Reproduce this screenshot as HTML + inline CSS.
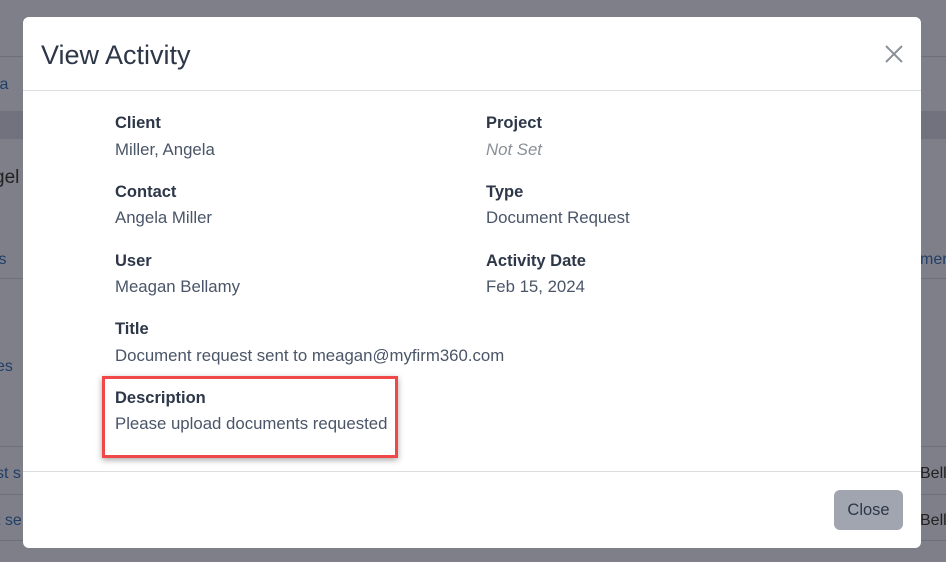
<!DOCTYPE html>
<html><head><meta charset="utf-8"><style>
*{margin:0;padding:0;box-sizing:border-box}
body{width:946px;height:562px;overflow:hidden;background:#7f7f8a;font-family:"Liberation Sans",sans-serif;position:relative}
.bg{position:absolute;color:#1f3f66;font-size:16px;white-space:nowrap}
.ln{position:absolute;left:0;width:946px;height:1px;background:#6e6f7a}
.modal{position:absolute;left:23px;top:17px;width:898px;height:531px;background:#fff;border-radius:6px}
.hdr{position:absolute;left:18px;top:23px;font-size:27px;color:#2d3748}
.x{position:absolute;left:861px;top:27px}
.sep{position:absolute;left:0;width:898px;height:1px;background:#dcdde0}
.lab{position:absolute;font-size:16.5px;font-weight:bold;color:#2d3748}
.val{position:absolute;font-size:16.8px;color:#4a5568}
.btn{position:absolute;left:811px;top:473px;width:69px;height:40px;background:#a0a5b0;border-radius:6px;color:#2d3748;font-size:16.5px;text-align:center;line-height:40px}
.hl{position:absolute;left:79px;top:359px;width:296px;height:82px;border:3px solid #f04848;box-shadow:0 2px 6px rgba(0,0,0,.35)}
</style></head><body>
<div class="ln" style="top:56px"></div>
<div style="position:absolute;left:0;top:111px;width:946px;height:28px;background:#71727e"></div>
<div class="ln" style="top:278px"></div>
<div class="ln" style="top:446px"></div>
<div class="ln" style="top:494px"></div>
<div class="ln" style="top:540px"></div>
<div class="bg" style="left:-4px;top:76px">la</div>
<div class="bg" style="left:-6px;top:167px;color:#222;font-size:19px">gel</div>
<div class="bg" style="left:-6px;top:251px">ts</div>
<div class="bg" style="left:920px;top:251px">men</div>
<div class="bg" style="left:-4px;top:358px">es</div>
<div class="bg" style="left:-4px;top:465px">st s</div>
<div class="bg" style="left:-4px;top:512px">t se</div>
<div class="bg" style="left:920px;top:465px;color:#222">Bella</div>
<div class="bg" style="left:920px;top:512px;color:#222">Bella</div>
<div class="modal">
<div class="hdr">View Activity</div>
<svg class="x" width="20" height="20" viewBox="0 0 20 20"><path d="M2 2L18 18M18 2L2 18" stroke="#8a8f98" stroke-width="2"/></svg>
<div class="sep" style="top:73px"></div>
<div class="lab" style="left:92px;top:97px">Client</div>
<div class="val" style="left:92px;top:123px">Miller, Angela</div>
<div class="lab" style="left:463px;top:97px">Project</div>
<div class="val" style="left:463px;top:123px;font-style:italic;color:#8a8f98">Not Set</div>
<div class="lab" style="left:92px;top:166px">Contact</div>
<div class="val" style="left:92px;top:191px">Angela Miller</div>
<div class="lab" style="left:463px;top:166px">Type</div>
<div class="val" style="left:463px;top:191px">Document Request</div>
<div class="lab" style="left:92px;top:235px">User</div>
<div class="val" style="left:92px;top:260px">Meagan Bellamy</div>
<div class="lab" style="left:463px;top:235px">Activity Date</div>
<div class="val" style="left:463px;top:260px">Feb 15, 2024</div>
<div class="lab" style="left:92px;top:303px">Title</div>
<div class="val" style="left:92px;top:329px">Document request sent to meagan@myfirm360.com</div>
<div class="lab" style="left:92px;top:372px">Description</div>
<div class="val" style="left:92px;top:397px">Please upload documents requested</div>
<div class="hl"></div>
<div class="sep" style="top:454px"></div>
<div class="btn">Close</div>
</div>
</body></html>
